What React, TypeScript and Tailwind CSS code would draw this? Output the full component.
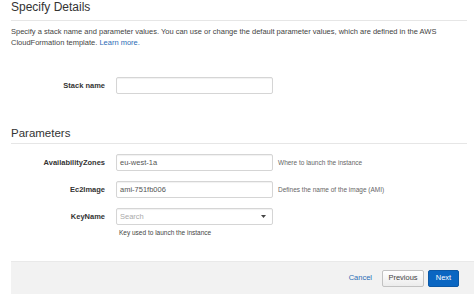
import React from 'react';


interface ParamRow {
    label: string;
    value: string;
    help: string;
}

const params: ParamRow[] = [
    { label: 'AvailabilityZones', value: 'eu-west-1a', help: 'Where to launch the instance' },
    { label: 'Ec2Image', value: 'ami-751fb006', help: 'Defines the name of the image (AMI)' },
];

const inputCls = 'w-[157px] h-[17px] border border-[#d5d5d5] rounded-[2px] bg-white shadow-[inset_0_1px_1px_rgba(0,0,0,0.06)] px-[3px] text-[7.5px] text-[#555] flex items-center';

const Label = ({ children }: { children: React.ReactNode }) => (
    <div className="w-[94px] pr-[11px] box-content text-right font-bold text-[7.5px] text-[#333]">{children}</div>
);

const App = () => {
    return (
        <div className="w-[474px] h-[297px] bg-white overflow-hidden font-['Liberation_Sans',Arial,sans-serif]">
            <div className="pl-[11px] pr-[7px]">
                <div className="pb-[6px] border-b border-[#e6e6e6]">
                    <h1 className="text-[12px] leading-[14px] text-[#333] font-normal">Specify Details</h1>
                </div>
                <p className="mt-[5px] text-[7.5px] leading-[11px] text-[#444]">
                    Specify a stack name and parameter values. You can use or change the default parameter values, which are defined in the AWS CloudFormation template. <a className="text-[#2b6cb5]">Learn more.</a>
                </p>

                <div className="mt-[29px] flex items-center">
                    <Label>Stack name</Label>
                    <div className={inputCls}></div>
                </div>

                <div className="mt-[32px] pb-[3px] border-b border-[#e6e6e6]">
                    <h2 className="text-[11.5px] leading-[14px] text-[#333] font-normal">Parameters</h2>
                </div>

                <div className="mt-[10px] flex flex-col gap-[10px]">
                    {params.map((p) => (
                        <div key={p.label} className="flex items-center">
                            <Label>{p.label}</Label>
                            <div className={inputCls}>{p.value}</div>
                            <span className="ml-[5px] text-[6.5px] text-[#666]">{p.help}</span>
                        </div>
                    ))}
                    <div>
                        <div className="flex items-center">
                            <Label>KeyName</Label>
                            <div className={inputCls + ' justify-between'}>
                                <span className="text-[#aaa]">Search</span>
                                <svg width="5" height="3" viewBox="0 0 5 3" className="mr-[3px]">
                                    <path d="M0 0h5L2.5 3z" fill="#444" />
                                </svg>
                            </div>
                        </div>
                        <div className="mt-[3px] ml-[108px] text-[6.5px] leading-[9px] text-[#444]">Key used to launch the instance</div>
                    </div>
                </div>
            </div>

            <div className="mt-[24px] ml-[11px] h-[33px] bg-[#f2f2f2] border-t border-[#e9e9e9] flex items-center justify-end pr-[15px]">
                <a className="text-[7.5px] text-[#2b6cb5] mr-[10px]">Cancel</a>
                <button className="h-[17px] w-[42px] rounded-[2px] border border-[#c2c2c2] bg-gradient-to-b from-white to-[#ececec] text-[7.5px] text-[#444] mr-[4px]">Previous</button>
                <button className="h-[17px] w-[31px] rounded-[2px] border border-[#0b58a6] bg-[#0a66c2] text-[7.5px] text-white">Next</button>
            </div>
        </div>
    );
};

export default App;
